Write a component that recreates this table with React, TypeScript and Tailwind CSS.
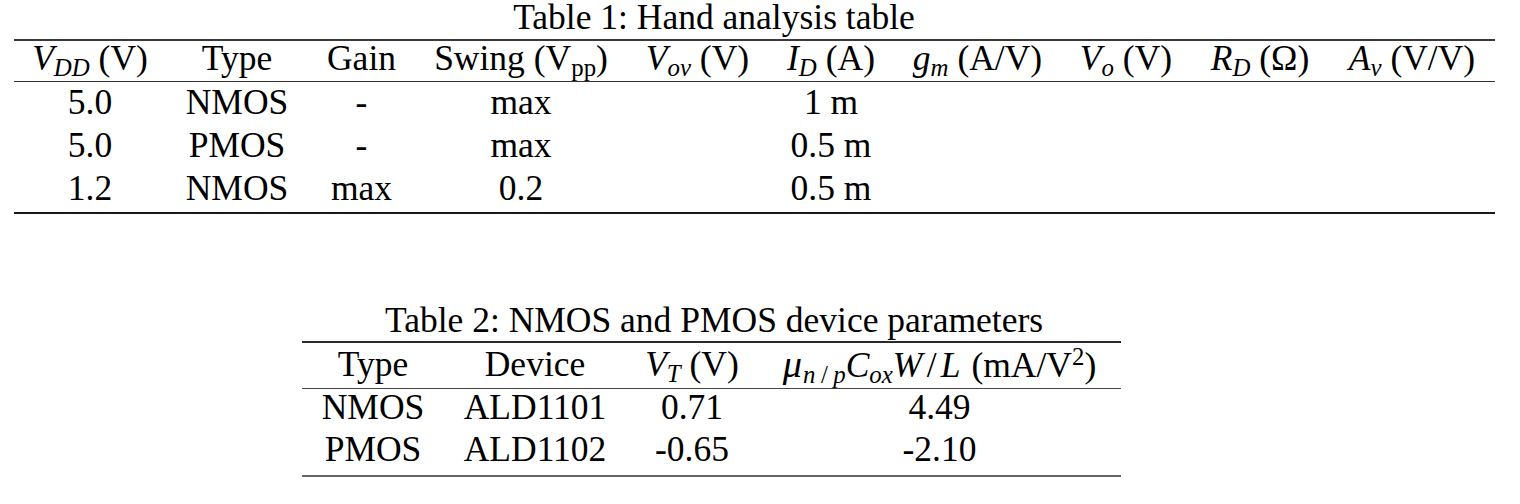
import type { ReactNode } from "react";

const t1Cols =
  "grid grid-cols-[152px_142px_107px_212px_141px_126px_167px_130px_138px_166px]";
const t2Cols = "grid grid-cols-[142px_182px_132px_363px]";

const Sub = ({ children }: { children: ReactNode }) => (
  <sub className="text-[0.7em]">{children}</sub>
);

const Cell = ({ children }: { children?: ReactNode }) => (
  <div className="text-center whitespace-nowrap">{children}</div>
);

const handRows = [
  ["5.0", "NMOS", "-", "max", "", "1 m"],
  ["5.0", "PMOS", "-", "max", "", "0.5 m"],
  ["1.2", "NMOS", "max", "0.2", "", "0.5 m"],
];

const deviceRows = [
  ["NMOS", "ALD1101", "0.71", "4.49"],
  ["PMOS", "ALD1102", "-0.65", "-2.10"],
];

export default function App() {
  return (
    <div className="w-[1520px] h-[504px] bg-white text-black font-['Liberation_Serif','Times_New_Roman',serif] text-[35.5px] leading-[34px] pl-[14px] overflow-hidden">
      <div className="w-[1400px]">
        {/* Table 1 */}
        <div className="h-[39px] text-center whitespace-nowrap">
          Table 1: Hand analysis table
        </div>
        <div className="w-[1481px]">
          <div className={`${t1Cols} h-[43px] border-t-2 border-b border-t-[#3a3a3a] border-b-[#333]`}>
            <Cell>
              <i>V</i>
              <Sub>
                <i>DD</i>
              </Sub>{" "}
              (V)
            </Cell>
            <Cell>Type</Cell>
            <Cell>Gain</Cell>
            <Cell>
              Swing (V<Sub>pp</Sub>)
            </Cell>
            <Cell>
              <i>V</i>
              <Sub>
                <i>ov</i>
              </Sub>{" "}
              (V)
            </Cell>
            <Cell>
              <i>I</i>
              <Sub>
                <i>D</i>
              </Sub>{" "}
              (A)
            </Cell>
            <Cell>
              <i>g</i>
              <Sub>
                <i>m</i>
              </Sub>{" "}
              (A/V)
            </Cell>
            <Cell>
              <i>V</i>
              <Sub>
                <i>o</i>
              </Sub>{" "}
              (V)
            </Cell>
            <Cell>
              <i>R</i>
              <Sub>
                <i>D</i>
              </Sub>{" "}
              (Ω)
            </Cell>
            <Cell>
              <i>A</i>
              <Sub>
                <i>v</i>
              </Sub>{" "}
              (V/V)
            </Cell>
          </div>
          <div className="h-[132px] pt-[3px] border-b-2 border-[#1a1a1a]">
            {handRows.map((row, i) => (
              <div key={i} className={`${t1Cols} h-[43px]`}>
                {row.map((v, j) => (
                  <Cell key={j}>{v}</Cell>
                ))}
                <Cell />
                <Cell />
                <Cell />
                <Cell />
              </div>
            ))}
          </div>
        </div>

        {/* Table 2 */}
        <div className="mt-[89px] h-[38px] text-center whitespace-nowrap">
          Table 2: NMOS and PMOS device parameters
        </div>
        <div className="w-[819px] ml-[288px]">
          <div className={`${t2Cols} h-[48px] pt-[4px] border-t-2 border-b border-t-[#2a2a2a] border-b-[#444]`}>
            <Cell>Type</Cell>
            <Cell>Device</Cell>
            <Cell>
              <i>V</i>
              <Sub>
                <i>T</i>
              </Sub>{" "}
              (V)
            </Cell>
            <Cell>
              <i className="text-[1.08em] mr-[1px]">μ</i>
              <Sub>
                <i>n</i>
                <span className="mx-[0.22em]">/</span>
                <i>p</i>
              </Sub>
              <i>C</i>
              <Sub>
                <i>ox</i>
              </Sub>
              <i>W</i>
              <span className="mx-[0.12em]">/</span>
              <i>L</i>{" "}
              <span className="ml-[2px]">
                (mA/V<sup className="text-[0.7em]">2</sup>)
              </span>
            </Cell>
          </div>
          <div className="h-[88px] pt-[1px] border-b-2 border-[#666]">
            {deviceRows.map((row, i) => (
              <div key={i} className={`${t2Cols} h-[42px]`}>
                {row.map((v, j) => (
                  <Cell key={j}>{v}</Cell>
                ))}
              </div>
            ))}
          </div>
        </div>
      </div>
    </div>
  );
}
